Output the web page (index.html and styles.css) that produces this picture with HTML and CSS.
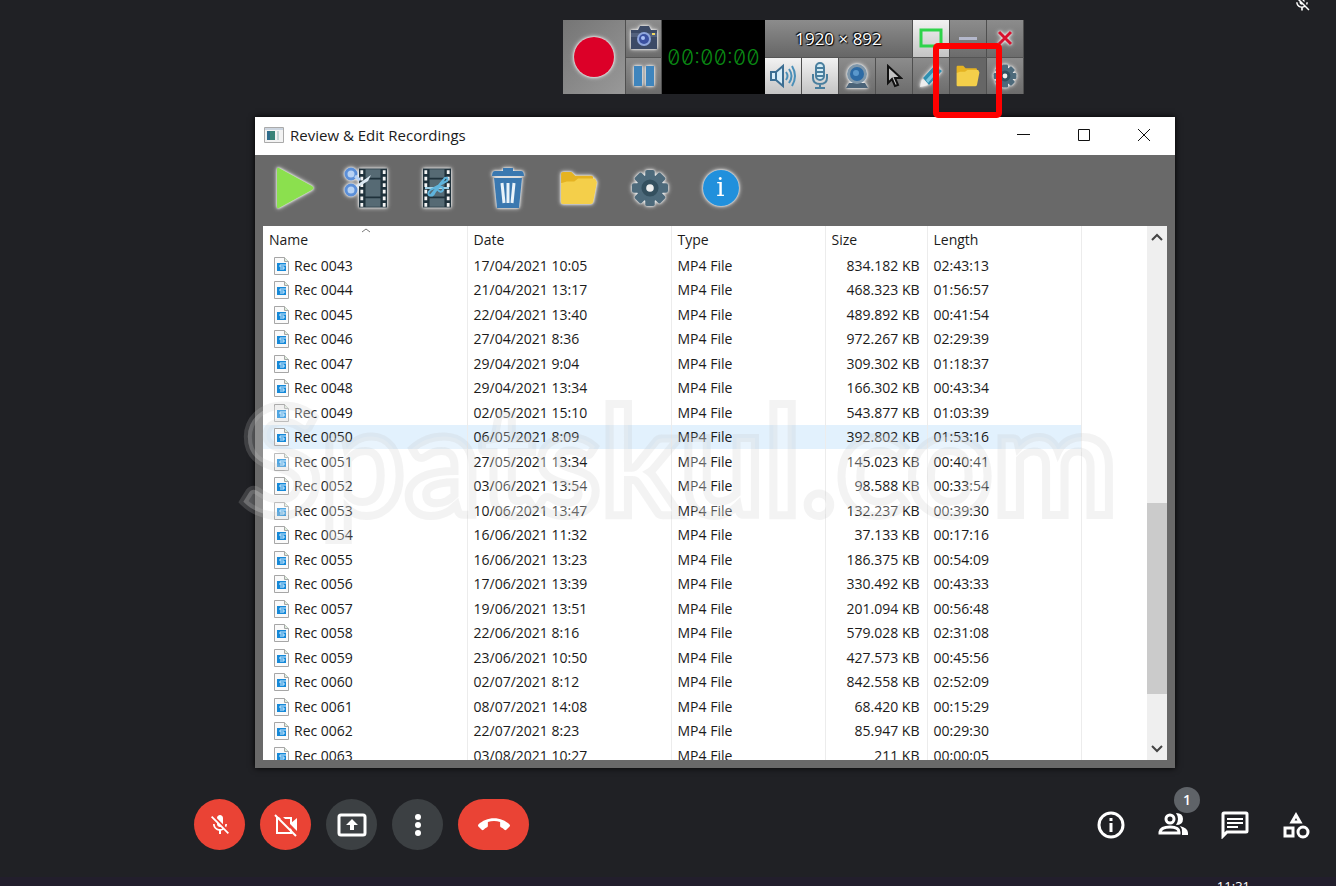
FILE: index.html
```
<!DOCTYPE html>
<html lang="en">
<head>
  <meta charset="UTF-8" />
  <meta name="viewport" content="width=device-width, initial-scale=1.0"/>
  <title>Review &amp; Edit Recordings</title>
  <link rel="stylesheet" href="styles.css">
</head>
<body>
  <!-- Shared icons -->
  <svg class="sprite" aria-hidden="true">
    <symbol id="file" viewBox="0 0 15 18">
      <path d="M.5.5h10l4 4v13H.5z" fill="#fafafa" stroke="#a6a6a6"/>
      <path d="M10.5.5v4h4" fill="#dfeedd" stroke="#a6a6a6"/>
      <path d="M3 6h9v8H3z" fill="#1689d8"/>
      <path d="M12 8H6v2h4v2H6" fill="none" stroke="#d2edff"/>
    </symbol>
    <symbol id="folder" viewBox="0 0 40 36">
      <path d="M1 3q0-2 2-2h9l4 4h17q2 0 2 2v6H1z" fill="#e5b322"/>
      <path d="M1 33V13l6-2h8l4-3h18l2 4-4 21q-1 2-3 2H3q-2 0-2-2z" fill="#f4cf4a"/>
    </symbol>
    <symbol id="gear" viewBox="0 0 40 40">
      <g fill="#4d6a7b">
        <circle cx="20" cy="20" r="14"/>
        <rect x="15" y="1" width="10" height="38" rx="2"/>
        <rect x="15" y="1" width="10" height="38" rx="2" transform="rotate(45 20 20)"/>
        <rect x="15" y="1" width="10" height="38" rx="2" transform="rotate(90 20 20)"/>
        <rect x="15" y="1" width="10" height="38" rx="2" transform="rotate(135 20 20)"/>
      </g>
      <circle cx="20" cy="20" r="9" fill="#34505f"/>
      <circle cx="20" cy="20" r="4" fill="#eee"/>
    </symbol>
    <symbol id="mic-off" viewBox="0 0 24 24">
      <path fill="#fff" d="M19 11h-1.700c0 .74-.16 1.430-.43 2.050l1.230 1.230c.56-.98.9-2.090.9-3.280zm-4.020.17c0-.06.02-.11.02-.17V5c0-1.660-1.340-3-3-3S9 3.340 9 5v.18l5.980 5.990zM4.270 3L3 4.270l6.010 6.010V11c0 1.660 1.330 3 2.990 3 .22 0 .44-.03.65-.08l1.660 1.660c-.71.33-1.500.52-2.310.52-2.760 0-5.300-2.100-5.300-5.100H5c0 3.410 2.720 6.230 6 6.720V21h2v-3.280c.91-.13 1.770-.45 2.540-.9L19.730 21 21 19.730 4.270 3z"/>
    </symbol>
    <symbol id="film" viewBox="0 0 30 42">
      <path d="M0 0h30v42H0z" fill="#1f313b"/>
      <path d="M7 1h16v9H7zM7 12h16v18H7zM7 32h16v9H7z" fill="#566a74"/>
      <path d="M3 2v39M27 2v39" stroke="#f4f4f4" stroke-width="3" stroke-dasharray="4 3"/>
    </symbol>
  </svg>

  <div class="muted"><svg width="20" height="20"><use href="#mic-off"/></svg></div>

  <section class="recorder" aria-label="Screen recorder">
    <button class="record" aria-label="Record">
      <svg class="glow" width="42" height="42" viewBox="0 0 42 42"><circle cx="21" cy="21" r="20" fill="#dc0028"/></svg>
    </button>
    <div class="stack">
      <button aria-label="Screenshot">
        <svg class="glow" width="28" height="26" viewBox="0 0 28 26">
          <path d="M1 5h7l2-4h9l2 4h6v19H1z" fill="#3c4a66"/>
          <path d="M1 8h26v4H1z" fill="#53617d"/>
          <circle cx="14" cy="14" r="7" fill="#8fa6dc"/><circle cx="14" cy="14" r="5" fill="#3a50a0"/><circle cx="13" cy="13" r="2" fill="#a9c0f5"/>
          <path d="M22 8h3v2h-3z" fill="#f0d860"/>
        </svg>
      </button>
      <button aria-label="Pause">
        <svg class="glow" width="22" height="22" viewBox="0 0 22 22"><path d="M1 1h8v20H1zM13 1h8v20h-8z" fill="#3f85bd"/></svg>
      </button>
    </div>
    <div class="display">00:00:00</div>
    <div class="options">
      <div class="size">1920 × 892</div>
      <button class="on" aria-label="Capture area">
        <svg width="24" height="20" viewBox="0 0 24 20"><path d="M2 2h20v16H2z" fill="none" stroke="#2fd34b" stroke-width="3"/></svg>
      </button>
      <button aria-label="Minimize recorder">
        <svg width="20" height="6" viewBox="0 0 20 6"><path d="M1 2h18v3H1z" fill="#b4b8cc"/></svg>
      </button>
      <button aria-label="Close recorder">
        <svg class="glow" width="16" height="16" viewBox="0 0 16 16"><path d="M2 2l12 12M14 2L2 14" stroke="#d8102e" stroke-width="3"/></svg>
      </button>
      <button class="on" aria-label="Speaker">
        <svg width="28" height="26" viewBox="0 0 28 26" fill="none" stroke="#3d6f93" stroke-width="2">
          <path d="M2 9h5v8H2zM7 9l7-6v20l-7-6" fill="#d9edf8"/><path d="M17 9q3 4 0 8M20 6q5 7 0 14M23 3q6 10 0 20" stroke="#4a8fb8"/>
        </svg>
      </button>
      <button class="on" aria-label="Microphone">
        <svg width="18" height="28" viewBox="0 0 18 28" fill="none" stroke="#4a7f9e" stroke-width="2">
          <rect x="5" y="1" width="8" height="17" rx="4" fill="#d4ecf5"/><path d="M5 6h8M5 10h8M5 14h8M2 12v4q0 6 7 6t7-6v-4M9 22v3M4 26h10"/>
        </svg>
      </button>
      <button aria-label="Webcam">
        <svg class="glow" width="24" height="26" viewBox="0 0 24 26">
          <path d="M4 20h16l3 5H1z" fill="#4b6378"/><circle cx="12" cy="11" r="10" fill="#7f97aa"/><circle cx="12" cy="11" r="7" fill="#2d6ba5"/><circle cx="11" cy="10" r="3" fill="#5a98cc"/>
        </svg>
      </button>
      <button aria-label="Show cursor">
        <svg width="18" height="24" viewBox="0 0 18 24"><path d="M3 2v17l4-4 3 7 3-1-3-7h6z" fill="#c4c4c4" stroke="#111" stroke-width="2"/></svg>
      </button>
      <button aria-label="Draw">
        <svg class="glow" width="26" height="26" viewBox="0 0 26 26">
          <path d="M2 24l2-8 6 6z" fill="#eee"/><path d="M5 15L17 2l7 6-13 14z" fill="#2f8fb0"/><path d="M8 17L20 4l2 2L10 20z" fill="#7cc5dc"/>
        </svg>
      </button>
      <button class="dark" aria-label="Recordings"><svg width="24" height="22"><use href="#folder"/></svg></button>
      <button aria-label="Settings"><svg class="glow" width="24" height="24"><use href="#gear"/></svg></button>
    </div>
  </section>

  <main class="window">
    <header class="titlebar">
      <svg width="20" height="16" viewBox="0 0 20 16">
        <path d="M.5.5h19v15H.5z" fill="#f3f3f3" stroke="#aaa"/><path d="M1 1h18v2H1z" fill="#ccd5e0"/><path d="M3 4h8v9H3z" fill="#398377"/><path d="M3 4h3v9H3z" fill="#2f6d8c"/><path d="M13 4h2v9h-2z" fill="#c6d6d6"/>
      </svg>
      <h1>Review &amp; Edit Recordings</h1>
      <button aria-label="Minimize"><svg width="14" height="14"><path d="M0 6.500h13" stroke="#111"/></svg></button>
      <button aria-label="Maximize"><svg width="14" height="14"><path d="M1.500 1.500h11v11h-11z" fill="none" stroke="#111"/></svg></button>
      <button aria-label="Close"><svg width="14" height="14"><path d="M1 1l12 12M13 1L1 13" stroke="#111"/></svg></button>
    </header>

    <nav class="tools" aria-label="Recording tools">
      <button aria-label="Play">
        <svg class="glow" width="40" height="42" viewBox="0 0 40 42"><path d="M2 2q0-2 2-1l33 18q3 2 0 4L4 41q-2 1-2-1z" fill="#8be04e"/></svg>
      </button>
      <button aria-label="Trim">
        <svg class="glow" width="44" height="42" viewBox="0 0 44 42">
          <svg x="15" width="28" height="42"><use href="#film"/></svg>
          <path d="M10 20L27 8l-3 6-13 8z" fill="#dce8f2"/>
          <g fill="#b7d2f3" stroke="#5b8fd8" stroke-width="3"><circle cx="7" cy="7" r="5"/><circle cx="7" cy="23" r="5"/></g>
          <path d="M11 9l5 4" stroke="#b7d2f3" stroke-width="3"/>
        </svg>
      </button>
      <button aria-label="Split">
        <svg class="glow" width="28" height="42" viewBox="0 0 28 42">
          <use href="#film" width="28" height="42"/>
          <path d="M2 21h24" stroke="#9fd0e6" stroke-width="2"/>
          <path d="M8 28L22 11q4-1 2 3L9 22q-5 3-3 6 4 2 6-3l4-5q5-1 4 3-2 4-6-1" fill="none" stroke="#5fb4dd" stroke-width="2"/>
        </svg>
      </button>
      <button aria-label="Delete">
        <svg class="glow" width="34" height="42" viewBox="0 0 34 42">
          <path d="M12 4V1h10v3h8q3 0 3 5H1q0-5 3-5z" fill="#3a78b0"/><path d="M3 11h28l-3 30H6z" fill="#3a78b0"/>
          <path d="M11 16l2 20M17 16v20M23 16l-2 20" stroke="#e9f3fa" stroke-width="3"/>
        </svg>
      </button>
      <button aria-label="Open folder"><svg class="glow" width="38" height="34"><use href="#folder"/></svg></button>
      <button aria-label="Settings"><svg class="glow" width="38" height="38"><use href="#gear"/></svg></button>
      <button class="info" aria-label="Information"><span class="glow">i</span></button>
    </nav>

    <div class="list">
      <div class="scroller">
        <table>
          <colgroup><col class="wide"><col class="wide"><col class="mid"><col class="narrow"><col class="mid"><col></colgroup>
          <thead>
            <tr><th>Name<svg class="sort" width="10" height="5"><path d="M1 4l4-3 4 3" fill="none" stroke="#777"/></svg></th><th>Date</th><th>Type</th><th>Size</th><th>Length</th><th></th></tr>
          </thead>
          <tbody>
            <tr><td><svg><use href="#file"/></svg>Rec 0043</td><td>17/04/2021 10:05</td><td>MP4 File</td><td>834.182 KB</td><td>02:43:13</td><td></td></tr>
            <tr><td><svg><use href="#file"/></svg>Rec 0044</td><td>21/04/2021 13:17</td><td>MP4 File</td><td>468.323 KB</td><td>01:56:57</td><td></td></tr>
            <tr><td><svg><use href="#file"/></svg>Rec 0045</td><td>22/04/2021 13:40</td><td>MP4 File</td><td>489.892 KB</td><td>00:41:54</td><td></td></tr>
            <tr><td><svg><use href="#file"/></svg>Rec 0046</td><td>27/04/2021 8:36</td><td>MP4 File</td><td>972.267 KB</td><td>02:29:39</td><td></td></tr>
            <tr><td><svg><use href="#file"/></svg>Rec 0047</td><td>29/04/2021 9:04</td><td>MP4 File</td><td>309.302 KB</td><td>01:18:37</td><td></td></tr>
            <tr><td><svg><use href="#file"/></svg>Rec 0048</td><td>29/04/2021 13:34</td><td>MP4 File</td><td>166.302 KB</td><td>00:43:34</td><td></td></tr>
            <tr><td><svg><use href="#file"/></svg>Rec 0049</td><td>02/05/2021 15:10</td><td>MP4 File</td><td>543.877 KB</td><td>01:03:39</td><td></td></tr>
            <tr class="selected"><td><svg><use href="#file"/></svg>Rec 0050</td><td>06/05/2021 8:09</td><td>MP4 File</td><td>392.802 KB</td><td>01:53:16</td><td></td></tr>
            <tr><td><svg><use href="#file"/></svg>Rec 0051</td><td>27/05/2021 13:34</td><td>MP4 File</td><td>145.023 KB</td><td>00:40:41</td><td></td></tr>
            <tr><td><svg><use href="#file"/></svg>Rec 0052</td><td>03/06/2021 13:54</td><td>MP4 File</td><td>98.588 KB</td><td>00:33:54</td><td></td></tr>
            <tr><td><svg><use href="#file"/></svg>Rec 0053</td><td>10/06/2021 13:47</td><td>MP4 File</td><td>132.237 KB</td><td>00:39:30</td><td></td></tr>
            <tr><td><svg><use href="#file"/></svg>Rec 0054</td><td>16/06/2021 11:32</td><td>MP4 File</td><td>37.133 KB</td><td>00:17:16</td><td></td></tr>
            <tr><td><svg><use href="#file"/></svg>Rec 0055</td><td>16/06/2021 13:23</td><td>MP4 File</td><td>186.375 KB</td><td>00:54:09</td><td></td></tr>
            <tr><td><svg><use href="#file"/></svg>Rec 0056</td><td>17/06/2021 13:39</td><td>MP4 File</td><td>330.492 KB</td><td>00:43:33</td><td></td></tr>
            <tr><td><svg><use href="#file"/></svg>Rec 0057</td><td>19/06/2021 13:51</td><td>MP4 File</td><td>201.094 KB</td><td>00:56:48</td><td></td></tr>
            <tr><td><svg><use href="#file"/></svg>Rec 0058</td><td>22/06/2021 8:16</td><td>MP4 File</td><td>579.028 KB</td><td>02:31:08</td><td></td></tr>
            <tr><td><svg><use href="#file"/></svg>Rec 0059</td><td>23/06/2021 10:50</td><td>MP4 File</td><td>427.573 KB</td><td>00:45:56</td><td></td></tr>
            <tr><td><svg><use href="#file"/></svg>Rec 0060</td><td>02/07/2021 8:12</td><td>MP4 File</td><td>842.558 KB</td><td>02:52:09</td><td></td></tr>
            <tr><td><svg><use href="#file"/></svg>Rec 0061</td><td>08/07/2021 14:08</td><td>MP4 File</td><td>68.420 KB</td><td>00:15:29</td><td></td></tr>
            <tr><td><svg><use href="#file"/></svg>Rec 0062</td><td>22/07/2021 8:23</td><td>MP4 File</td><td>85.947 KB</td><td>00:29:30</td><td></td></tr>
            <tr><td><svg><use href="#file"/></svg>Rec 0063</td><td>03/08/2021 10:27</td><td>MP4 File</td><td>211 KB</td><td>00:00:05</td><td></td></tr>
          </tbody>
        </table>
      </div>
      <div class="scrollbar">
        <button aria-label="Scroll up"><svg width="12" height="8"><path d="M1 7l5-5 5 5" fill="none" stroke="#444" stroke-width="2"/></svg></button>
        <div class="track"><div class="thumb"></div></div>
        <button aria-label="Scroll down"><svg width="12" height="8"><path d="M1 1l5 5 5-5" fill="none" stroke="#444" stroke-width="2"/></svg></button>
      </div>
    </div>
  </main>

  <div class="highlight"></div>
  <div class="watermark">Spatskul.com</div>

  <footer class="callbar">
    <div class="controls">
      <button class="round red" aria-label="Unmute"><svg width="24" height="24"><use href="#mic-off"/></svg></button>
      <button class="round red" aria-label="Turn on camera">
        <svg width="26" height="26" viewBox="0 0 26 26"><path d="M4 6h14v15H4z" fill="none" stroke="#fff" stroke-width="2"/><path d="M18 11l6-5v15l-6-5z" fill="#fff"/><path d="M4 1l21 21" stroke="#ea4335" stroke-width="3"/><path d="M2 3l21 21" stroke="#fff" stroke-width="2"/></svg>
      </button>
      <button class="round" aria-label="Present now">
        <svg width="30" height="24" viewBox="0 0 30 24"><rect x="2" y="2" width="26" height="20" rx="2" fill="none" stroke="#fff" stroke-width="3"/><path d="M15 6l6 6h-4v5h-4v-5H9z" fill="#fff"/></svg>
      </button>
      <button class="round" aria-label="More options">
        <svg width="8" height="22" viewBox="0 0 8 22" fill="#fff"><circle cx="4" cy="3" r="3"/><circle cx="4" cy="11" r="3"/><circle cx="4" cy="19" r="3"/></svg>
      </button>
      <button class="round red leave" aria-label="Leave call">
        <svg width="32" height="32" viewBox="0 0 24 24"><path fill="#fff" d="M12 9c-1.600 0-3.150.25-4.600.72v3.100c0 .39-.23.74-.56.9-.98.49-1.870 1.120-2.660 1.850-.18.18-.43.28-.7.28-.28 0-.53-.11-.71-.29L.29 13.080c-.18-.17-.29-.42-.29-.7 0-.28.11-.53.29-.71C3.340 8.780 7.460 7 12 7s8.660 1.780 11.710 4.670c.18.18.29.43.29.71 0 .28-.11.53-.29.71l-2.480 2.480c-.18.18-.43.29-.71.29-.27 0-.52-.11-.7-.28-.79-.74-1.690-1.360-2.670-1.850-.33-.16-.56-.5-.56-.9v-3.100C15.150 9.250 13.600 9 12 9z"/></svg>
      </button>
    </div>
    <div class="panels">
      <button aria-label="Meeting details">
        <svg width="28" height="28" viewBox="0 0 28 28"><circle cx="14" cy="14" r="12" fill="none" stroke="#fff" stroke-width="3"/><path d="M14 7v3M14 12v9" stroke="#fff" stroke-width="3"/></svg>
      </button>
      <button aria-label="People">
        <svg width="30" height="28" viewBox="0 0 30 28"><g fill="none" stroke="#fff" stroke-width="3"><circle cx="12" cy="8" r="4"/><path d="M2 22v-1q1-5 10-5t9 5v1z"/></g><path d="M18 2q7 0 7 6t-7 6q4-6 0-12zM22 15q8 2 8 7v2h-6v-3q0-4-2-6z" fill="#fff"/></svg>
        <span class="badge">1</span>
      </button>
      <button aria-label="Chat">
        <svg width="28" height="28" viewBox="0 0 28 28" fill="none" stroke="#fff" stroke-width="3"><path d="M2 25V3q0-1 1-1h22q1 0 1 1v17q0 1-1 1H6z"/><path d="M6 8h16M6 12h16M6 16h11" stroke-width="2"/></svg>
      </button>
      <button aria-label="Activities">
        <svg width="28" height="28" viewBox="0 0 28 28" fill="none" stroke="#fff" stroke-width="3"><path d="M14 4l4 7h-8z"/><path d="M3 17h8v8H3z"/><circle cx="21" cy="21" r="5"/></svg>
      </button>
    </div>
  </footer>
  <div class="taskbar"><time>11:31</time></div>
</body>
</html>
```
FILE: styles.css
```
* {
  margin: 0;
  padding: 0;
  box-sizing: border-box;
}

body {
  background: #202125;
  height: 100vh;
  display: flex;
  flex-direction: column;
  justify-content: flex-end;
  overflow: hidden;
  font-family: "Open Sans", "Noto Sans", sans-serif;
  font-size: 14px;
  color: #1b1b1b;
}

button {
  border: none;
  background: none;
  font: inherit;
  display: flex;
  align-items: center;
  justify-content: center;
  cursor: pointer;
}

svg {
  display: block;
  flex: none;
}

.sprite {
  position: absolute;
  width: 0;
  height: 0;
}

.glow {
  filter: drop-shadow(0 0 1px #fff) drop-shadow(0 0 2px #ddd);
}

.muted {
  position: absolute;
  top: -7px;
  right: 24px;
}

/* Recorder toolbar */
.recorder {
  position: absolute;
  top: 20px;
  right: 312px;
  display: flex;
  height: 74px;
  background: #555;
}

.recorder button {
  background: linear-gradient(#8c8c8c, #6c6c6c);
  border-right: 1px solid #4f4f4f;
}

.recorder .record {
  width: 63px;
  background: linear-gradient(135deg, #757575, #999);
}

.stack {
  display: grid;
  grid-template-rows: 1fr 1fr;
  width: 36px;
  gap: 1px;
}

.display {
  width: 103px;
  display: flex;
  align-items: center;
  justify-content: center;
  background: #000;
  color: #0a8a14;
  font-family: Inter, sans-serif;
  font-size: 21px;
  font-weight: 300;
  font-feature-settings: "zero", "tnum";
}

.options {
  display: grid;
  grid-template-columns: repeat(7, 37px);
  grid-template-rows: 1fr 1fr;
  row-gap: 1px;
}

.options .size {
  grid-column: span 4;
  display: flex;
  align-items: center;
  justify-content: center;
  background: linear-gradient(#8c8c8c, #666);
  border-right: 1px solid #4f4f4f;
  color: #fff;
  font-size: 17px;
  text-shadow: 0 0 2px #000, 1px 1px 1px #000, -1px -1px 1px #000;
}

.options .on {
  background: linear-gradient(#f2f2f2, #c4c4c4);
}

.options .dark {
  background: #666;
}

.highlight {
  position: absolute;
  top: 43px;
  right: 334px;
  width: 69px;
  height: 75px;
  border: 6px solid #f00;
  border-radius: 5px;
}

/* Recordings window */
.window {
  position: absolute;
  top: 117px;
  right: 161px;
  bottom: 118px;
  left: 255px;
  display: flex;
  flex-direction: column;
  background: #696969;
  box-shadow: 0 0 6px #000;
}

.titlebar {
  display: flex;
  height: 38px;
  padding: 0 1px 2px 9px;
  align-items: center;
  background: #fff;
}

.titlebar h1 {
  flex: 1;
  padding-left: 6px;
  font-size: 15px;
  font-weight: 400;
}

.titlebar button {
  width: 60px;
  height: 36px;
}

.tools {
  display: flex;
  height: 71px;
  padding: 0 4px 6px;
}

.tools button {
  width: 71px;
}

.info span {
  width: 36px;
  height: 36px;
  border-radius: 50%;
  background: #2190dc;
  color: #fff;
  font-family: "DejaVu Serif", serif;
  font-size: 26px;
  line-height: 34px;
}

.list {
  flex: 1;
  min-height: 0;
  display: flex;
  margin: 0 8px 8px;
  background: #fff;
}

.scroller {
  flex: 1;
  overflow: hidden;
}

table {
  width: 100%;
  table-layout: fixed;
  border-collapse: collapse;
}

.wide {
  width: 204px;
}

.mid {
  width: 154px;
}

.narrow {
  width: 102px;
}

th, td {
  height: 24px;
  padding: 0 7px 0 6px;
  border-right: 1px solid #ececec;
  font-weight: 400;
  line-height: 20px;
  text-align: left;
  white-space: nowrap;
}

th {
  height: 27px;
}

tr:nth-child(odd) td {
  height: 25px;
}

th:last-child, td:last-child {
  border-right: none;
}

td:first-child {
  padding-left: 11px;
}

td:nth-child(4) {
  text-align: right;
}

td svg {
  float: left;
  width: 15px;
  height: 18px;
  margin: 1px 5px 0 0;
}

.selected td:not(:last-child) {
  background: #e2f1fd;
}

.sort {
  position: absolute;
  top: 111px;
  left: 106px;
}

.scrollbar {
  width: 20px;
  display: flex;
  flex-direction: column;
  background: #efefef;
}

.scrollbar button {
  height: 22px;
}

.track {
  flex: 1;
  display: grid;
  grid-template-rows: 52fr 39fr 9fr;
}

.thumb {
  grid-row: 2;
  background: #cbcbcb;
}

.watermark {
  position: absolute;
  top: 358px;
  left: 240px;
  color: rgba(255, 255, 255, 0.25);
  -webkit-text-stroke: 8px rgba(195, 195, 195, 0.2);
  font-family: Lato, sans-serif;
  font-size: 149px;
  font-weight: 700;
  line-height: 200px;
  pointer-events: none;
}

/* Call controls */
.callbar {
  display: flex;
  justify-content: space-between;
  align-items: center;
  height: 51px;
  margin: 0 26px 27px 194px;
}

.controls {
  display: flex;
  gap: 15px;
}

.round {
  width: 51px;
  height: 51px;
  border-radius: 26px;
  background: #3c4043;
}

.round.red {
  background: #ea4335;
}

.round.leave {
  width: 71px;
}

.panels {
  display: flex;
  gap: 33px;
}

.panels button {
  position: relative;
}

.badge {
  position: absolute;
  top: -24px;
  right: -12px;
  width: 26px;
  height: 26px;
  border-radius: 50%;
  background: #5f6368;
  color: #fff;
  font-size: 14px;
  font-weight: 600;
  line-height: 26px;
}

.taskbar {
  height: 9px;
  padding-right: 86px;
  overflow: hidden;
  background: #221e2c;
  color: #fff;
  font-size: 13px;
  line-height: 18px;
  text-align: right;
}
```
